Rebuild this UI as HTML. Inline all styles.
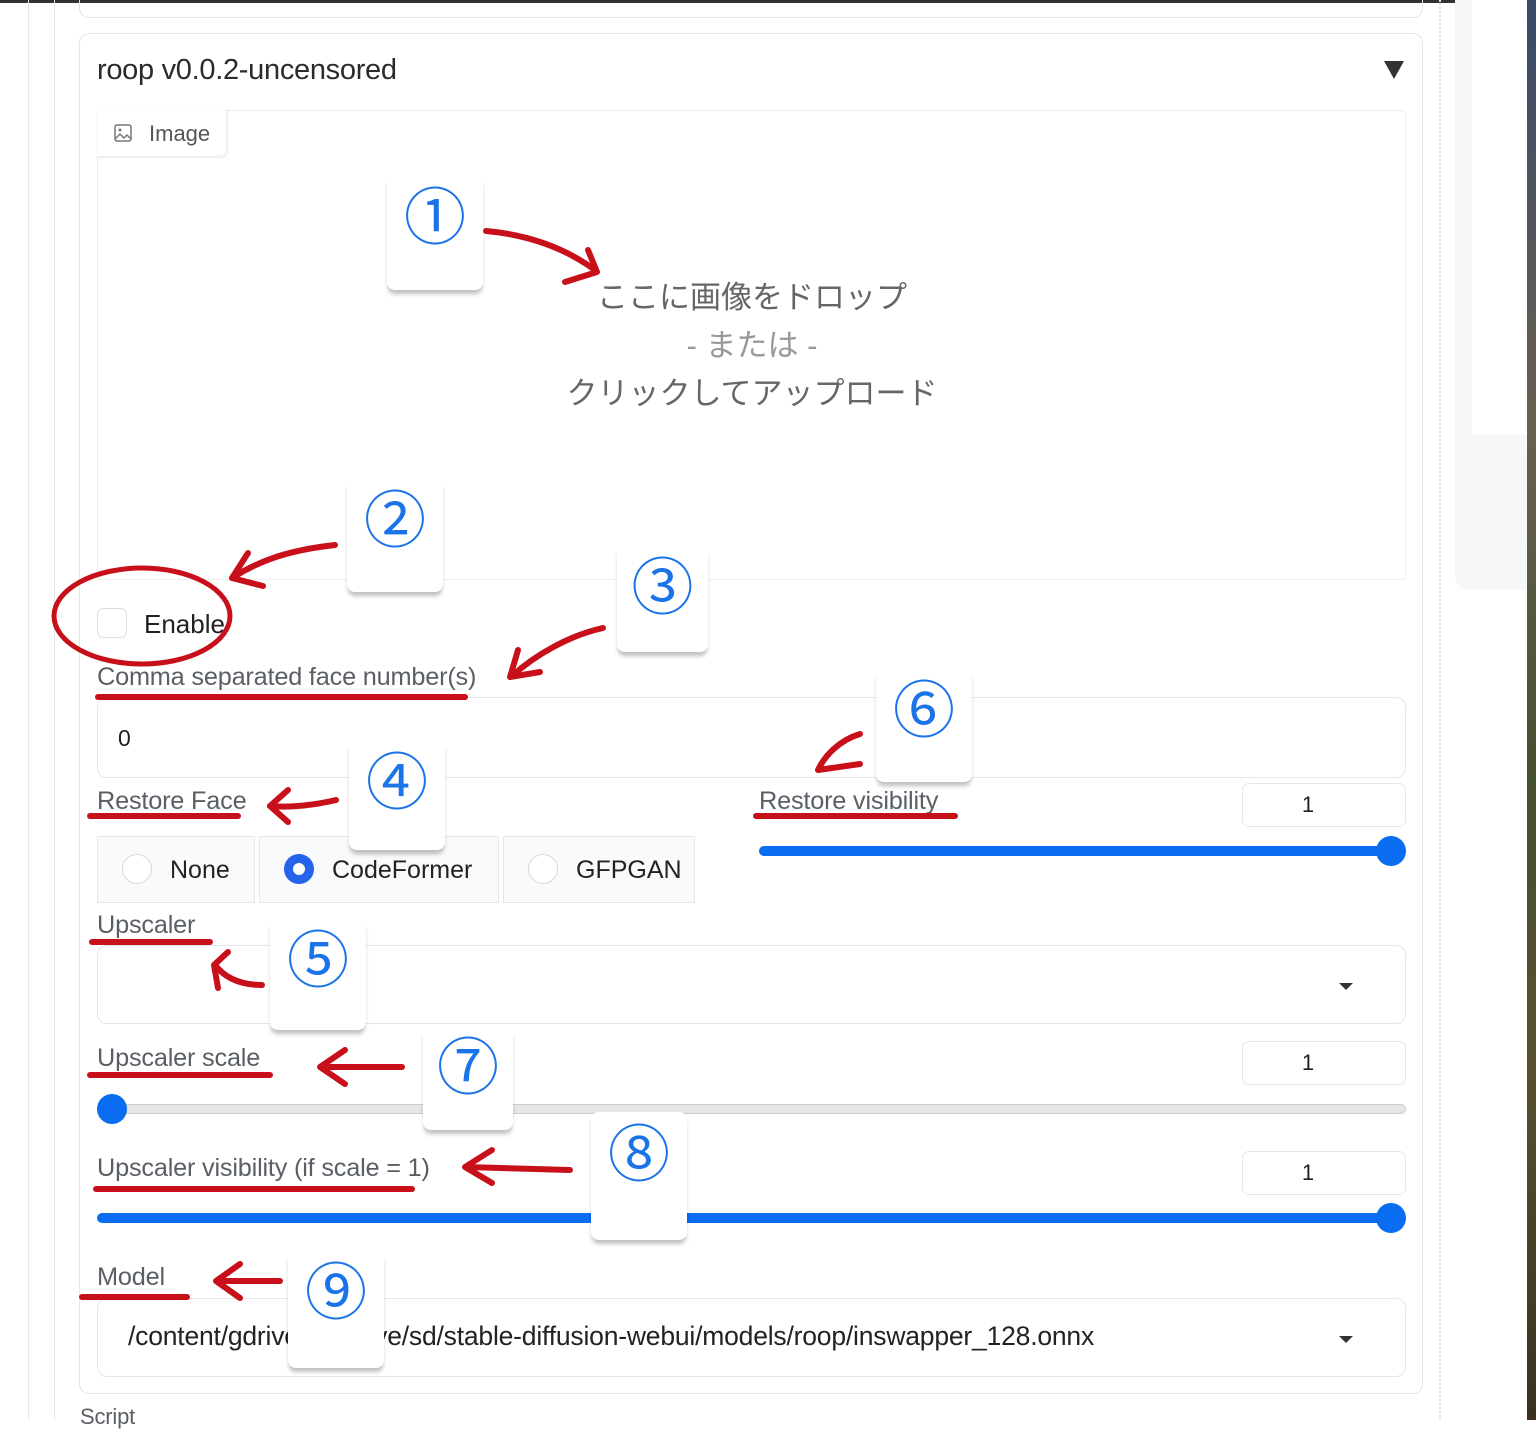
<!DOCTYPE html>
<html><head><meta charset="utf-8"><style>
*{box-sizing:border-box;margin:0;padding:0}
body{width:1536px;height:1420px;overflow:hidden;background:#fff;position:relative;font-family:"Liberation Sans","Noto Sans CJK JP",sans-serif;color:#222}
.a{position:absolute}
.lbl{position:absolute;font-size:25.3px;color:#5a5f66;line-height:1;letter-spacing:-0.2px}
.box{position:absolute;border:1px solid #e5e7eb;border-radius:10px;background:#fff}
.num{position:absolute;border:1px solid #e6e6e6;border-radius:7px;background:#fff;font-size:22px;text-align:center;line-height:42px;padding-right:32px}
.ann{position:absolute;background:#fff;border-radius:8px;box-shadow:0 5px 4px -1px rgba(0,0,0,.25);text-align:center}
.ann span{display:block;font-size:62px;color:#1a73e8;line-height:1;margin-top:6px;font-family:"Noto Sans CJK JP","DejaVu Sans",sans-serif}
.track{position:absolute;height:10px;border-radius:5px}
.thumb{position:absolute;width:30px;height:30px;border-radius:50%;background:#0a6cf0}
.radio{position:absolute;width:30px;height:30px;border-radius:50%;border:1.5px solid #d8d8d8;background:#fff}
.cell{position:absolute;top:836px;height:67px;border:1px solid #e5e7eb;background:#f9fafb;font-size:25px;line-height:67px;color:#222}
</style></head><body>
<div class="a" style="left:0;top:0;width:1536px;height:3px;background:#333"></div>
<div class="a" style="left:28px;top:0;width:1px;height:1420px;background:#e5e7eb"></div>
<div class="a" style="left:54px;top:0;width:1px;height:1420px;background:#e5e7eb"></div>
<div class="a" style="left:79px;top:-20px;width:1344px;height:38px;border:1px solid #e5e7eb;border-radius:10px"></div>
<div class="a" style="left:1439px;top:0;width:0;height:1420px;border-left:2px dotted #e3e3e3"></div>
<div class="a" style="left:1527px;top:0;width:9px;height:1420px;background:linear-gradient(#3a4a6a,#6a6050 30%,#455030 55%,#5a5030 75%,#3a3020)"></div>
<div class="a" style="left:1455px;top:0;width:72px;height:590px;background:#f5f7f9;border-radius:0 0 0 14px"></div>
<div class="a" style="left:1472px;top:0;width:55px;height:435px;background:#fff"></div>
<div class="a" style="left:1455px;top:590px;width:72px;height:830px;background:#fff;border-radius:0 0 8px 0"></div>

<div class="box" style="left:79px;top:33px;width:1344px;height:1361px"></div>
<div class="a" style="left:97px;top:54px;font-size:29px;color:#2b2b2b;letter-spacing:-0.3px">roop v0.0.2-uncensored</div>
<div class="a" style="left:1384px;top:61px;width:0;height:0;border-left:10px solid transparent;border-right:10px solid transparent;border-top:18px solid #333"></div>

<div class="a" style="left:97px;top:110px;width:1309px;height:470px;border:1px solid #eee;border-radius:4px"></div>
<div class="a" style="left:97px;top:110px;width:129px;height:46px;background:#fff;border-radius:0 0 6px 0;box-shadow:1px 1px 3px rgba(0,0,0,.12)"></div>
<svg class="a" style="left:114px;top:124px" width="18" height="18" viewBox="0 0 18 18"><rect x="1" y="1" width="16" height="16" rx="2" fill="none" stroke="#777" stroke-width="1.5"/><circle cx="6" cy="6" r="1.5" fill="#777"/><path d="M1 15l5-5 4 4 3-3 4 4" fill="none" stroke="#777" stroke-width="1.5"/></svg>
<div class="a" style="left:149px;top:121px;font-size:22px;color:#555">Image</div>
<div class="a" style="left:500px;top:274px;width:504px;text-align:center;font-size:31px;color:#666;line-height:1.55">ここに画像をドロップ<br><span style="color:#999">- または -</span><br>クリックしてアップロード</div>

<div class="a" style="left:97px;top:608px;width:30px;height:30px;border:1.5px solid #ddd;border-radius:6px"></div>
<div class="a" style="left:144px;top:609px;font-size:26px;color:#222">Enable</div>

<div class="lbl" style="left:97px;top:665px">Comma separated face number(s)</div>
<div class="box" style="left:97px;top:697px;width:1309px;height:81px"></div>
<div class="a" style="left:118px;top:725px;font-size:23px">0</div>

<div class="lbl" style="left:97px;top:789px">Restore Face</div>
<div class="cell" style="left:97px;width:158px"><div class="radio" style="left:24px;top:17px"></div><span style="position:absolute;left:72px">None</span></div>
<div class="cell" style="left:259px;width:240px"><div class="radio" style="left:24px;top:17px;border:9px solid #2563eb"></div><span style="position:absolute;left:72px">CodeFormer</span></div>
<div class="cell" style="left:503px;width:192px"><div class="radio" style="left:24px;top:17px"></div><span style="position:absolute;left:72px">GFPGAN</span></div>

<div class="lbl" style="left:759px;top:789px">Restore visibility</div>
<div class="num" style="left:1242px;top:783px;width:164px;height:44px">1</div>
<div class="track" style="left:759px;top:846px;width:640px;background:#0a6cf0"></div>
<div class="thumb" style="left:1376px;top:836px"></div>

<div class="lbl" style="left:97px;top:913px">Upscaler</div>
<div class="box" style="left:97px;top:945px;width:1309px;height:79px"></div>
<div class="a" style="left:1339px;top:983px;border-left:7px solid transparent;border-right:7px solid transparent;border-top:7px solid #333"></div>

<div class="lbl" style="left:97px;top:1046px">Upscaler scale</div>
<div class="num" style="left:1242px;top:1041px;width:164px;height:44px">1</div>
<div class="track" style="left:97px;top:1104px;width:1309px;background:#e5e5e5;border:1px solid #ccc"></div>
<div class="thumb" style="left:97px;top:1094px"></div>

<div class="lbl" style="left:97px;top:1156px">Upscaler visibility (if scale = 1)</div>
<div class="num" style="left:1242px;top:1151px;width:164px;height:44px">1</div>
<div class="track" style="left:97px;top:1213px;width:1300px;background:#0a6cf0"></div>
<div class="thumb" style="left:1376px;top:1203px"></div>

<div class="lbl" style="left:97px;top:1265px">Model</div>
<div class="box" style="left:97px;top:1298px;width:1309px;height:79px"></div>
<div class="a" style="left:128px;top:1321px;font-size:26.5px;color:#222;letter-spacing:-0.2px">/content/gdrive/MyDrive/sd/stable-diffusion-webui/models/roop/inswapper_128.onnx</div>
<div class="a" style="left:1339px;top:1336px;border-left:7px solid transparent;border-right:7px solid transparent;border-top:7px solid #333"></div>
<div class="lbl" style="left:80px;top:1406px;font-size:22px">Script</div>

<div class="ann" style="left:387px;top:175px;width:96px;height:115px"><span>①</span></div>
<div class="ann" style="left:347px;top:478px;width:96px;height:114px"><span>②</span></div>
<div class="ann" style="left:617px;top:545px;width:91px;height:107px"><span>③</span></div>
<div class="ann" style="left:349px;top:740px;width:96px;height:110px"><span>④</span></div>
<div class="ann" style="left:876px;top:668px;width:96px;height:114px"><span>⑥</span></div>
<div class="ann" style="left:270px;top:918px;width:96px;height:112px"><span>⑤</span></div>
<div class="ann" style="left:423px;top:1025px;width:90px;height:105px"><span>⑦</span></div>
<div class="ann" style="left:591px;top:1112px;width:96px;height:128px"><span>⑧</span></div>
<div class="ann" style="left:288px;top:1250px;width:96px;height:118px"><span>⑨</span></div>

<svg class="a" style="left:0;top:0" width="1536" height="1420" fill="none" stroke="#c8101a" stroke-width="6" stroke-linecap="round" stroke-linejoin="round">
<path d="M486 231 C530 235 565 248 595 270"/><path d="M588 250 L597 272 L565 282"/>
<path d="M335 545 C290 550 260 560 232 578"/><path d="M248 553 L232 578 L263 586"/>
<ellipse cx="142" cy="616" rx="88" ry="48" stroke-width="5"/>
<path d="M603 628 C570 635 535 655 512 676"/><path d="M518 650 L510 677 L540 672"/>
<path d="M98 697 L465 697"/>
<path d="M90 816 L238 816"/>
<path d="M336 800 C315 805 290 808 270 806"/><path d="M288 790 L270 806 L288 822"/>
<path d="M860 734 C840 740 825 755 818 770 L860 764"/>
<path d="M756 816 L955 816"/>
<path d="M92 942 L210 942"/>
<path d="M262 985 C240 985 225 978 215 965"/><path d="M228 952 L214 965 L218 988"/>
<path d="M90 1075 L270 1075"/>
<path d="M402 1067 L322 1067"/><path d="M345 1050 L320 1067 L345 1084"/>
<path d="M96 1189 L412 1189"/>
<path d="M570 1170 L466 1167"/><path d="M492 1150 L465 1167 L492 1183"/>
<path d="M82 1297 L187 1297"/>
<path d="M280 1281 L218 1281"/><path d="M240 1264 L216 1281 L240 1298"/>
</svg>
</body></html>
